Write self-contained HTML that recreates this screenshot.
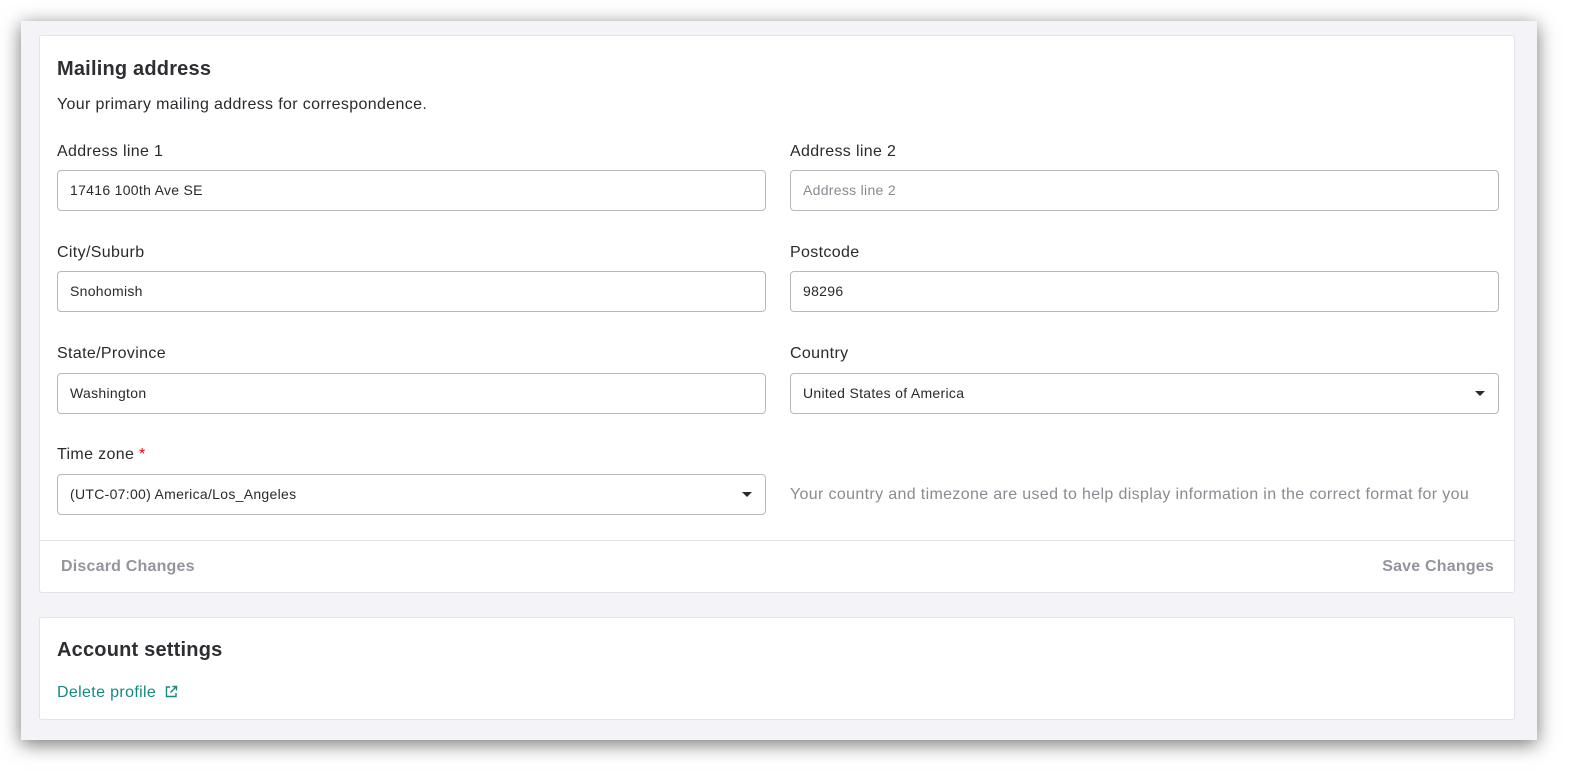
<!DOCTYPE html>
<html><head><style>
*{box-sizing:border-box;margin:0;padding:0}
body{width:1576px;height:774px;background:#fff;font-family:"Liberation Sans",sans-serif;color:#2a2a2e;position:relative;overflow:hidden}
.win{position:absolute;left:21px;top:21px;width:1516px;height:719px;background:#f4f4f8;box-shadow:0 4px 18px rgba(0,0,0,.55)}
.card{position:absolute;left:18px;width:1476px;background:#fff;border:1px solid #e3e3e8;border-radius:3px}
h2{position:absolute;left:17px;font-size:20px;font-weight:bold;color:#2e2e32;letter-spacing:0.2px}
.t{position:absolute;font-size:16px;color:#2a2a2e;letter-spacing:0.35px}
.inp{position:absolute;width:709px;height:41px;border:1px solid #b8b8be;border-radius:4px;font-size:14px;padding-left:12px;line-height:39px;color:#2a2a2e;letter-spacing:0.3px}
.ph{color:#8a8a92}
.arr{position:absolute;right:13px;top:17px;width:0;height:0;border-left:5px solid transparent;border-right:5px solid transparent;border-top:5px solid #2a2a2e}
.ft{position:absolute;font-size:16px;font-weight:bold;color:#94949c;letter-spacing:0.2px}
</style></head><body>
<div class="win">
<div class="card" style="top:14px;height:558px">
<h2 style="top:22px">Mailing address</h2>
<div class="t" style="left:17px;top:60px">Your primary mailing address for correspondence.</div>
<div class="t" style="left:17px;top:107px">Address line 1</div>
<div class="t" style="left:750px;top:107px">Address line 2</div>
<div class="inp" style="left:17px;top:134px">17416 100th Ave SE</div>
<div class="inp ph" style="left:750px;top:134px">Address line 2</div>
<div class="t" style="left:17px;top:208px">City/Suburb</div>
<div class="t" style="left:750px;top:208px">Postcode</div>
<div class="inp" style="left:17px;top:235px">Snohomish</div>
<div class="inp" style="left:750px;top:235px">98296</div>
<div class="t" style="left:17px;top:309px">State/Province</div>
<div class="t" style="left:750px;top:309px">Country</div>
<div class="inp" style="left:17px;top:337px">Washington</div>
<div class="inp" style="left:750px;top:337px">United States of America<span class="arr"></span></div>
<div class="t" style="left:17px;top:410px">Time zone <span style="color:#e00">*</span></div>
<div class="inp" style="left:17px;top:438px">(UTC-07:00) America/Los_Angeles<span class="arr"></span></div>
<div class="t" style="left:750px;top:450px;color:#8a8a92">Your country and timezone are used to help display information in the correct format for you</div>
<div style="position:absolute;left:0;right:0;top:504px;border-top:1px solid #e3e3e8"></div>
<div class="ft" style="left:21px;top:522px">Discard Changes</div>
<div class="ft" style="right:20px;top:522px">Save Changes</div>
</div>
<div class="card" style="top:596px;height:103px">
<h2 style="top:21px">Account settings</h2>
<div class="t" style="left:17px;top:66px;color:#14897e">Delete profile
<svg width="13" height="13" viewBox="0 0 13 13" style="margin-left:4px;vertical-align:-1px" fill="none" stroke="#14897e" stroke-width="1.4"><path d="M5 2H1.5v9.5H11V8"/><path d="M7.5 1.5h4v4M11.5 1.5L5.5 7.5"/></svg></div>
</div>
</div>
</body></html>
